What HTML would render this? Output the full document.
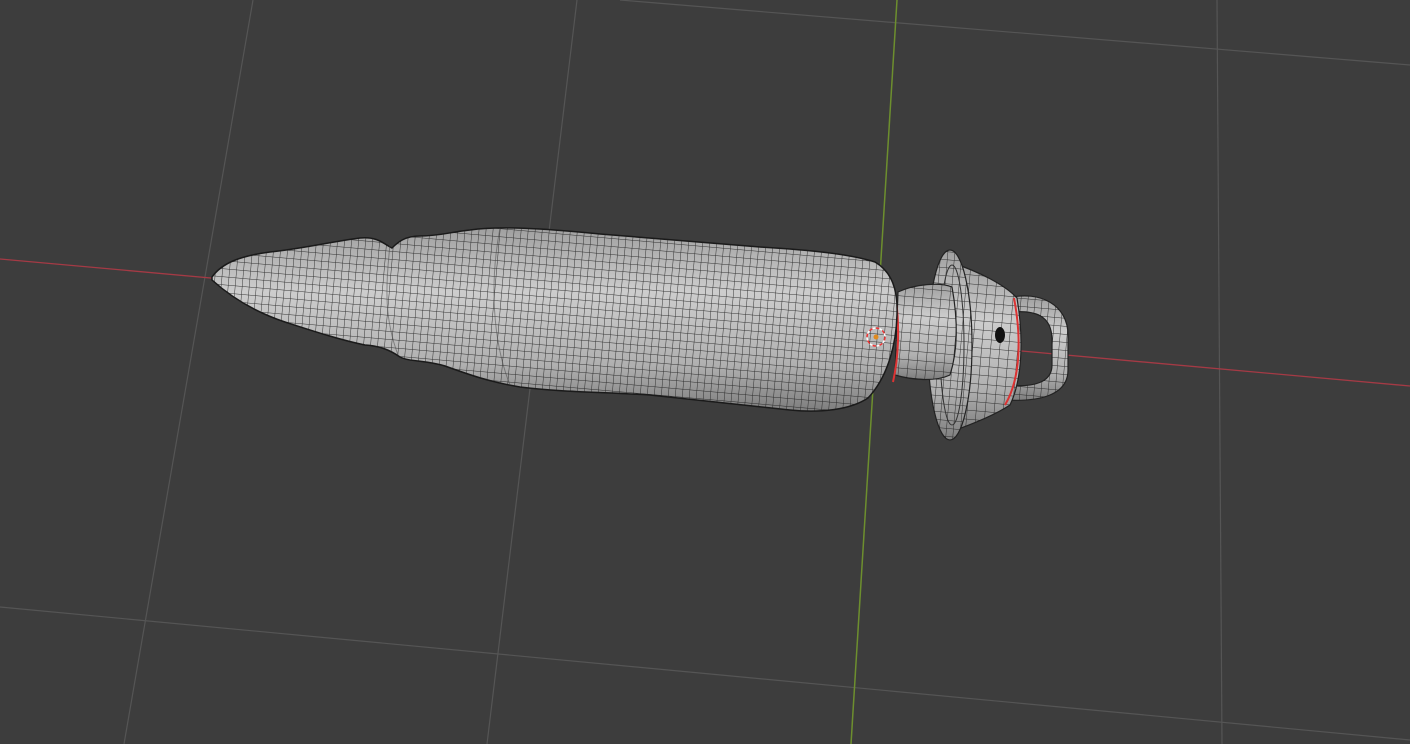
<!DOCTYPE html>
<html><head><meta charset="utf-8"><style>
html,body{margin:0;padding:0;background:#3d3d3d;overflow:hidden}
svg{display:block}
</style></head><body>
<svg width="1410" height="744" viewBox="0 0 1410 744" xmlns="http://www.w3.org/2000/svg">
<defs>
<pattern id="wire" width="7" height="8" patternUnits="userSpaceOnUse" patternTransform="rotate(5)">
<path d="M0 0H7M0 0V8" stroke="#1c1c1c" stroke-width="1" opacity="0.85"/>
</pattern>
<pattern id="wire2" width="9" height="9" patternUnits="userSpaceOnUse" patternTransform="rotate(5)">
<path d="M0 0H9M0 0V9" stroke="#1c1c1c" stroke-width="1" opacity="0.85"/>
</pattern>
<linearGradient id="g" x1="0" y1="0" x2="0" y2="1">
<stop offset="0" stop-color="#a0a0a0"/>
<stop offset="0.35" stop-color="#cdcdcd"/>
<stop offset="0.75" stop-color="#b0b0b0"/>
<stop offset="1" stop-color="#7e7e7e"/>
</linearGradient>
</defs>
<rect width="1410" height="744" fill="#3d3d3d"/>
<g stroke="#555" stroke-width="1.2" fill="none">
<line x1="253" y1="0" x2="124" y2="744"/>
<line x1="577" y1="0" x2="487" y2="744"/>
<line x1="1217" y1="0" x2="1222" y2="744"/>
<line x1="620" y1="0" x2="1410" y2="65"/>
<line x1="0" y1="607" x2="1410" y2="740"/>
</g>
<line x1="0" y1="259" x2="1410" y2="386" stroke="#a53a45" stroke-width="1.3"/>
<line x1="897" y1="0" x2="851" y2="744" stroke="#6d8f2e" stroke-width="1.5"/>
<!-- handle -->
<path d="M1008 298 C1040 290 1068 305 1068 335 L1068 370 C1068 395 1040 402 1005 400 L1005 385 C1035 388 1052 382 1052 365 L1052 340 C1052 315 1035 310 1010 312 Z" fill="url(#g)" stroke="#222" stroke-width="1.2"/>
<path d="M1008 298 C1040 290 1068 305 1068 335 L1068 370 C1068 395 1040 402 1005 400 L1005 385 C1035 388 1052 382 1052 365 L1052 340 C1052 315 1035 310 1010 312 Z" fill="url(#wire)"/>
<!-- cap bell -->
<path d="M950 262 C980 272 1005 285 1017 298 C1024 340 1022 380 1010 405 C995 415 970 425 950 432 Z" fill="url(#g)" stroke="#222" stroke-width="1.2"/>
<path d="M950 262 C980 272 1005 285 1017 298 C1024 340 1022 380 1010 405 C995 415 970 425 950 432 Z" fill="url(#wire2)"/>
<!-- cap rim -->
<ellipse cx="950" cy="345" rx="22" ry="95" fill="url(#g)" stroke="#222" stroke-width="1.2"/>
<ellipse cx="950" cy="345" rx="22" ry="95" fill="url(#wire)"/>
<ellipse cx="952" cy="345" rx="12" ry="80" fill="none" stroke="#333" stroke-width="1"/>
<path d="M1014 298 C1022 340 1020 380 1005 405" stroke="#d33" stroke-width="2" fill="none"/>
<ellipse cx="1000" cy="335" rx="5" ry="8" fill="#111"/>
<!-- neck -->
<path d="M898 292 C915 284 940 282 952 287 C958 320 958 350 950 375 C935 382 912 380 895 375 Z" fill="url(#g)" stroke="#222" stroke-width="1.2"/>
<path d="M898 292 C915 284 940 282 952 287 C958 320 958 350 950 375 C935 382 912 380 895 375 Z" fill="url(#wire2)"/>
<path d="M896 300 C900 330 898 360 893 382" stroke="#d33" stroke-width="2" fill="none"/>
<!-- body -->
<path d="M212 277 C222 263 240 256 270 252 C300 249 330 242 360 238 C378 236 385 245 392 248 C398 242 405 236 420 236 C440 236 450 232 470 230 C500 226 540 228 600 234 C650 238 700 242 760 247 C810 250 850 254 875 262 C892 272 898 290 897 315 C896 350 885 380 868 398 C850 410 820 413 790 410 C740 405 700 400 650 395 C600 392 560 392 520 387 C490 382 470 375 445 366 C425 360 410 362 400 357 C390 350 380 346 365 345 C340 340 310 330 285 322 C255 312 232 298 212 280 Z" fill="url(#g)" stroke="#1a1a1a" stroke-width="1.5"/>
<path d="M212 277 C222 263 240 256 270 252 C300 249 330 242 360 238 C378 236 385 245 392 248 C398 242 405 236 420 236 C440 236 450 232 470 230 C500 226 540 228 600 234 C650 238 700 242 760 247 C810 250 850 254 875 262 C892 272 898 290 897 315 C896 350 885 380 868 398 C850 410 820 413 790 410 C740 405 700 400 650 395 C600 392 560 392 520 387 C490 382 470 375 445 366 C425 360 410 362 400 357 C390 350 380 346 365 345 C340 340 310 330 285 322 C255 312 232 298 212 280 Z" fill="url(#wire)"/>
<g stroke="#444" stroke-width="1" opacity="0.5" fill="none">
<path d="M390 245 C385 290 385 320 398 355"/>
<path d="M500 228 C490 280 492 340 510 385"/>
</g>
<!-- 3D cursor -->
<circle cx="876" cy="337" r="9" fill="none" stroke="#e33" stroke-width="1.5" stroke-dasharray="4 3"/>
<circle cx="876" cy="337" r="9" fill="none" stroke="#fff" stroke-width="1.5" stroke-dasharray="3 4" stroke-dashoffset="3.5"/>
<circle cx="876" cy="337" r="2.5" fill="#e08a1e"/>
</svg>
</body></html>
